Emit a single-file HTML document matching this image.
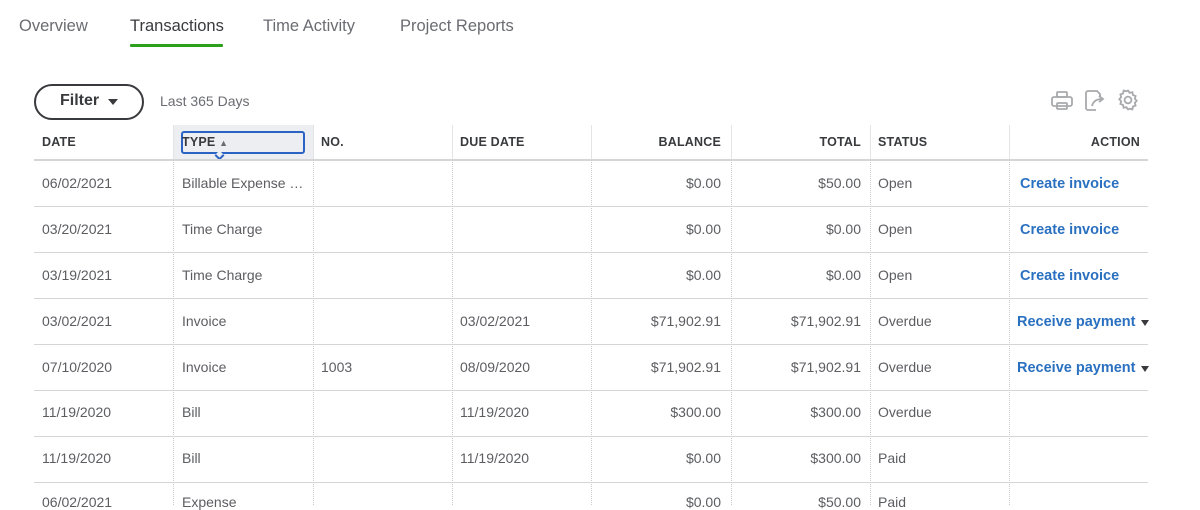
<!DOCTYPE html>
<html><head><meta charset="utf-8">
<style>
*{margin:0;padding:0;box-sizing:border-box}
body{width:1200px;height:505px;overflow:hidden;background:#fff;font-family:"Liberation Sans",sans-serif;color:#393a3d;position:relative}
.a{position:absolute;white-space:nowrap}
.tab{top:17px;font-size:16.5px;color:#6b6c72}
.h{top:135px;font-size:12.5px;font-weight:bold;color:#393a3d;letter-spacing:0.2px}
.c{font-size:14px;color:#5c5d61}
.r{text-align:right}
.lnk{font-size:14.5px;font-weight:bold;color:#2a70c0}
.vl{position:absolute;top:160px;height:345px;border-left:1px dotted #c9cacc}
.vh{position:absolute;top:125px;height:35px;width:1px;background:#e3e4e6}
.hl{position:absolute;left:34px;width:1114px;height:1px;background:#d4d5d7}
</style></head><body>
<div class="a tab" style="left:19px">Overview</div>
<div class="a tab" style="left:130px;color:#393a3d">Transactions</div>
<div class="a" style="left:130px;top:44px;width:93px;height:3px;background:#2ca01c;border-radius:1px"></div>
<div class="a tab" style="left:263px">Time Activity</div>
<div class="a tab" style="left:400px">Project Reports</div>

<div class="a" style="left:34px;top:84px;width:110px;height:36px;border:2px solid #393a3d;border-radius:18px"></div>
<div class="a" style="left:60px;top:92px;font-size:16px;font-weight:bold;color:#393a3d">Filter</div>
<div class="a" style="left:108px;top:99px;width:0;height:0;border-left:5px solid transparent;border-right:5px solid transparent;border-top:6px solid #393a3d"></div>
<div class="a" style="left:160px;top:93px;font-size:14px;color:#6b6c72">Last 365 Days</div>

<svg class="a" style="left:1050px;top:88px" width="95" height="26" viewBox="0 0 95 24" fill="none" stroke="#a8a9ac" stroke-width="1.8">
<rect x="7" y="3" width="10" height="5" rx="1"/><rect x="2" y="8" width="20" height="9" rx="2"/><rect x="7" y="14" width="10" height="6" rx="1"/>
<path d="M46 21H38a2 2 0 0 1-2-2V4a2 2 0 0 1 2-2h9l3 3v3"/><path d="M42 17c1-4 4-7 10-7"/><path d="M49 7l4 3-4 3"/>
<circle cx="78" cy="11" r="3.4"/><path d="M78 1.5l1.6 2.4 2.8-.7.5 2.8 2.7 1-.8 2.7 1.9 2.1-1.9 2.1.8 2.7-2.7 1-.5 2.8-2.8-.7L78 20.5l-1.6-2.4-2.8.7-.5-2.8-2.7-1 .8-2.7-1.9-2.1 1.9-2.1-.8-2.7 2.7-1 .5-2.8 2.8.7z"/>
</svg>

<div class="a" style="left:173px;top:125px;width:140px;height:35px;background:#eceef1"></div>
<div class="a" style="left:181px;top:131px;width:124px;height:23px;border:2px solid #2a63c4;border-radius:3px"></div>
<div class="a" style="left:216px;top:152px;width:7px;height:7px;background:#eceef1;border-right:2px solid #2a63c4;border-bottom:2px solid #2a63c4;transform:rotate(45deg)"></div>
<div class="vh" style="left:173px"></div><div class="vh" style="left:313px"></div><div class="vh" style="left:452px"></div><div class="vh" style="left:591px"></div><div class="vh" style="left:731px"></div><div class="vh" style="left:870px"></div><div class="vh" style="left:1009px"></div>
<div class="a h" style="left:42px">DATE</div>
<div class="a h" style="left:182px">TYPE <span style="font-size:9px;color:#6b6c72">&#9650;</span></div>
<div class="a h" style="left:321px">NO.</div>
<div class="a h" style="left:460px">DUE DATE</div>
<div class="a h r" style="left:591px;width:130px">BALANCE</div>
<div class="a h r" style="left:731px;width:130px">TOTAL</div>
<div class="a h" style="left:878px">STATUS</div>
<div class="a h r" style="left:1009px;width:131px">ACTION</div>
<div class="hl" style="top:159px;height:2px"></div>

<div class="vl" style="left:173px"></div><div class="vl" style="left:313px"></div><div class="vl" style="left:452px"></div><div class="vl" style="left:591px"></div><div class="vl" style="left:731px"></div><div class="vl" style="left:870px"></div><div class="vl" style="left:1009px"></div>
<div class="hl" style="top:206px"></div><div class="hl" style="top:252px"></div><div class="hl" style="top:298px"></div><div class="hl" style="top:344px"></div><div class="hl" style="top:390px"></div><div class="hl" style="top:436px"></div><div class="hl" style="top:482px"></div>

<div class="a c" style="left:42px;top:175px">06/02/2021</div><div class="a c" style="left:182px;top:175px">Billable Expense …</div>
<div class="a c r" style="left:591px;width:130px;top:175px">$0.00</div><div class="a c r" style="left:731px;width:130px;top:175px">$50.00</div><div class="a c" style="left:878px;top:175px">Open</div><div class="a lnk" style="left:1020px;top:176px">Create invoice</div>

<div class="a c" style="left:42px;top:221px">03/20/2021</div><div class="a c" style="left:182px;top:221px">Time Charge</div>
<div class="a c r" style="left:591px;width:130px;top:221px">$0.00</div><div class="a c r" style="left:731px;width:130px;top:221px">$0.00</div><div class="a c" style="left:878px;top:221px">Open</div><div class="a lnk" style="left:1020px;top:222px">Create invoice</div>

<div class="a c" style="left:42px;top:267px">03/19/2021</div><div class="a c" style="left:182px;top:267px">Time Charge</div>
<div class="a c r" style="left:591px;width:130px;top:267px">$0.00</div><div class="a c r" style="left:731px;width:130px;top:267px">$0.00</div><div class="a c" style="left:878px;top:267px">Open</div><div class="a lnk" style="left:1020px;top:268px">Create invoice</div>

<div class="a c" style="left:42px;top:313px">03/02/2021</div><div class="a c" style="left:182px;top:313px">Invoice</div><div class="a c" style="left:460px;top:313px">03/02/2021</div>
<div class="a c r" style="left:591px;width:130px;top:313px">$71,902.91</div><div class="a c r" style="left:731px;width:130px;top:313px">$71,902.91</div><div class="a c" style="left:878px;top:313px">Overdue</div><div class="a lnk" style="left:1017px;top:314px">Receive payment</div>
<div class="a" style="left:1141px;top:320px;border-left:4px solid transparent;border-right:4px solid transparent;border-top:6px solid #393a3d"></div>

<div class="a c" style="left:42px;top:359px">07/10/2020</div><div class="a c" style="left:182px;top:359px">Invoice</div><div class="a c" style="left:321px;top:359px">1003</div><div class="a c" style="left:460px;top:359px">08/09/2020</div>
<div class="a c r" style="left:591px;width:130px;top:359px">$71,902.91</div><div class="a c r" style="left:731px;width:130px;top:359px">$71,902.91</div><div class="a c" style="left:878px;top:359px">Overdue</div><div class="a lnk" style="left:1017px;top:360px">Receive payment</div>
<div class="a" style="left:1141px;top:366px;border-left:4px solid transparent;border-right:4px solid transparent;border-top:6px solid #393a3d"></div>

<div class="a c" style="left:42px;top:404px">11/19/2020</div><div class="a c" style="left:182px;top:404px">Bill</div><div class="a c" style="left:460px;top:404px">11/19/2020</div>
<div class="a c r" style="left:591px;width:130px;top:404px">$300.00</div><div class="a c r" style="left:731px;width:130px;top:404px">$300.00</div><div class="a c" style="left:878px;top:404px">Overdue</div>

<div class="a c" style="left:42px;top:450px">11/19/2020</div><div class="a c" style="left:182px;top:450px">Bill</div><div class="a c" style="left:460px;top:450px">11/19/2020</div>
<div class="a c r" style="left:591px;width:130px;top:450px">$0.00</div><div class="a c r" style="left:731px;width:130px;top:450px">$300.00</div><div class="a c" style="left:878px;top:450px">Paid</div>

<div class="a c" style="left:42px;top:494px">06/02/2021</div><div class="a c" style="left:182px;top:494px">Expense</div>
<div class="a c r" style="left:591px;width:130px;top:494px">$0.00</div><div class="a c r" style="left:731px;width:130px;top:494px">$50.00</div><div class="a c" style="left:878px;top:494px">Paid</div>
</body></html>
